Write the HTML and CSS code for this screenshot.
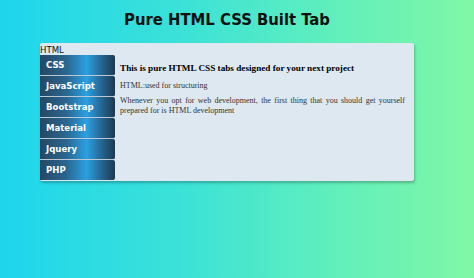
FILE: index.html
```html
<!DOCTYPE html>
<html>
<head>
<meta charset="utf-8">
<link rel="stylesheet" href="styles.css">
</head>
<body>
<div class="page">
  <h1 class="title">Pure HTML CSS Built Tab</h1>
  <div class="card">
    <div class="label">HTML</div>
    <div class="body">
      <ul class="tabs">
        <li class="tab">CSS</li>
        <li class="tab">JavaScript</li>
        <li class="tab">Bootstrap</li>
        <li class="tab">Material</li>
        <li class="tab">Jquery</li>
        <li class="tab">PHP</li>
      </ul>
      <div class="panel">
        <h2 class="panel-title">This is pure HTML CSS tabs designed for your next project</h2>
        <p class="lead">HTML:used for structuring</p>
        <p class="text">Whenever you opt for web development, the first thing that you should get yourself prepared for is HTML development</p>
      </div>
    </div>
  </div>
</div>
</body>
</html>
```
FILE: styles.css
```css
html, body {
  margin: 0;
  padding: 0;
}
body {
  width: 474px;
  height: 278px;
  overflow: hidden;
  background: linear-gradient(to right, #1ed5ee 0%, #3de2d6 40%, #60efbc 70%, #80f7a6 100%);
  font-family: "DejaVu Sans", sans-serif;
}
.page {
  margin-left: 40px;
  width: 374px;
}
.title {
  margin: 0;
  padding-top: 10px;
  height: 43px;
  box-sizing: border-box;
  text-align: center;
  font-family: "DejaVu Sans Condensed", "DejaVu Sans", sans-serif;
  font-weight: bold;
  font-size: 16.5px;
  line-height: 20px;
  color: #111;
}
.card {
  height: 138px;
  background: #dde8f0;
  border-radius: 2px;
  box-shadow: 1px 2px 3px rgba(0, 0, 0, 0.25);
  display: flex;
  flex-direction: column;
}
.label {
  height: 12px;
  font-family: "DejaVu Sans Condensed", "DejaVu Sans", sans-serif;
  font-size: 9.5px;
  line-height: 13px;
  color: #111;
}
.body {
  display: flex;
  flex: 1;
}
.tabs {
  list-style: none;
  margin: 0;
  padding: 0;
  width: 75px;
  display: flex;
  flex-direction: column;
}
.tab {
  height: 20px;
  border-bottom: 1px solid #b9c8d4;
  border-radius: 0 2px 2px 0;
  background: linear-gradient(to right, #264864 0%, #2a668f 35%, #2aa0e0 62%, #266592 82%, #1e3850 100%);
  color: #fff;
  font-family: "DejaVu Sans Condensed", "DejaVu Sans", sans-serif;
  font-weight: bold;
  font-size: 9.5px;
  line-height: 20px;
  padding-left: 6px;
}
.tab:last-child {
  border-bottom: none;
}
.panel {
  flex: 1;
  padding: 7px 9px 0 5px;
  font-family: "Liberation Serif", serif;
}
.panel-title {
  margin: 0 0 7px;
  font-size: 9.2px;
  line-height: 12px;
  font-weight: bold;
  color: #000;
}
.lead {
  margin: 0 0 5px;
  font-size: 8px;
  line-height: 10px;
  color: #333;
}
.text {
  margin: 0;
  font-size: 8px;
  line-height: 10px;
  color: #333;
  text-align: justify;
}
```
